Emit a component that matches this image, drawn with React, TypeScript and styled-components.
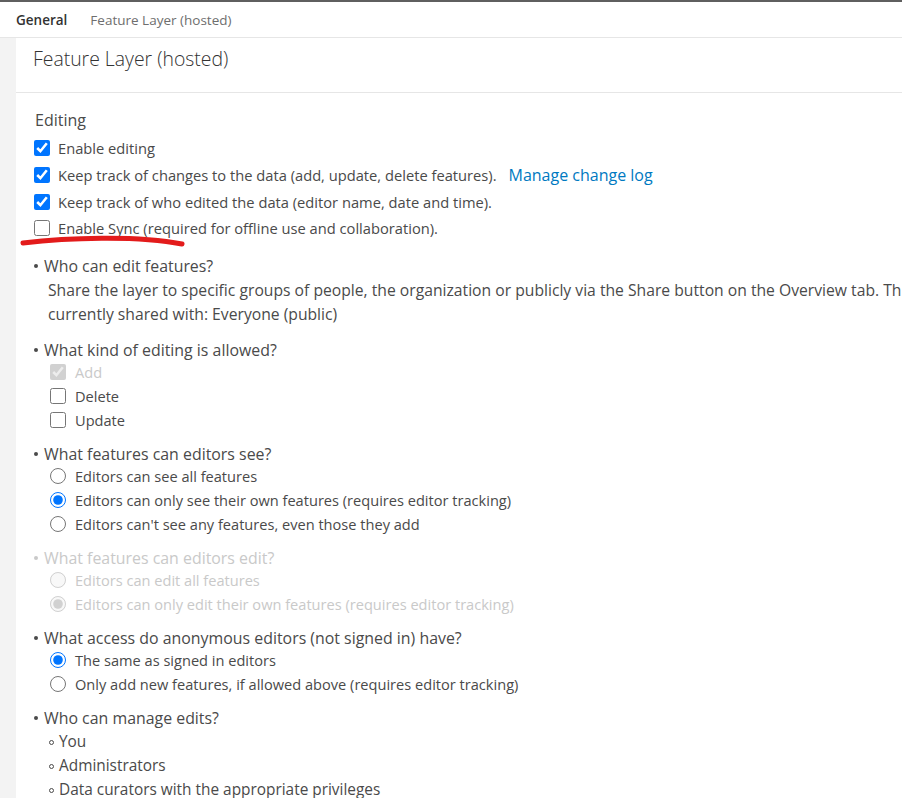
import React from "react";
import styled, { createGlobalStyle } from "styled-components";

const Global = createGlobalStyle`
  html, body { margin: 0; padding: 0; overflow: hidden; background: #fff; }
  body { font-family: "Open Sans", "Noto Sans", sans-serif; color: #4a4a4a; }
  * { box-sizing: border-box; }
`;

const Page = styled.div`
  width: 1120px;
  height: 798px;
  border-top: 2px solid #5f5f5f;
  display: flex;
  flex-direction: column;
`;

const TabBar = styled.div`
  height: 36px;
  border-bottom: 1px solid #e6e6e6;
  display: flex;
  align-items: center;
  gap: 23px;
  padding-left: 16px;
  flex: none;
`;

const Tab = styled.span<{ $active?: boolean }>`
  font-size: 13.5px;
  font-weight: ${(p) => (p.$active ? 600 : 400)};
  color: ${(p) => (p.$active ? "#323232" : "#6e6e6e")};
`;

const Body = styled.div`
  display: flex;
  flex: 1;
`;

const Gutter = styled.div`
  width: 16px;
  background: #f3f3f3;
  flex: none;
`;

const Main = styled.div`
  flex: 1;
`;

const Header = styled.div`
  height: 55px;
  border-bottom: 1px solid #e6e6e6;
  padding: 9px 0 0 17px;
`;

const Title = styled.h1`
  margin: 0;
  font-size: 19.4px;
  font-weight: 300;
  line-height: 24px;
  color: #323232;
`;

const Section = styled.section`
  position: relative;
  padding: 15px 0 0 18px;
`;

const SectionTitle = styled.h2`
  margin: 0 0 3px 1px;
  font-size: 16px;
  font-weight: 400;
  line-height: 24px;
  color: #4a4a4a;
`;

const CheckRow = styled.label<{ $tall?: boolean }>`
  display: flex;
  align-items: center;
  gap: 8px;
  height: ${(p) => (p.$tall ? 28 : 26)}px;
  font-size: 14.7px;
  color: #4a4a4a;
  white-space: nowrap;
`;

const Box = styled.input`
  width: 16px;
  height: 16px;
  margin: 0;
  flex: none;
`;

const Link = styled.a`
  margin-left: 4px;
  font-size: 16px;
  color: #0079c1;
  text-decoration: none;
`;

const Annotation = styled.svg`
  position: absolute;
  left: 0;
  top: 0;
  pointer-events: none;
  overflow: visible;
`;

const List = styled.div`
  margin-top: 13px;
  display: flex;
  flex-direction: column;
  gap: 10px;
`;

const Item = styled.div<{ $disabled?: boolean }>`
  color: ${(p) => (p.$disabled ? "#c9c9c9" : "#4a4a4a")};
`;

const Question = styled.div`
  display: flex;
  align-items: center;
  margin-bottom: -2px;
  font-size: 15.9px;
  line-height: 24px;
  color: inherit;
  white-space: nowrap;
  &::before {
    content: "";
    width: 4px;
    height: 4px;
    border-radius: 50%;
    background: currentColor;
    margin: 0 6px 0 0;
    flex: none;
  }
`;

const Description = styled.div`
  padding: 2px 0 2px 14px;
  font-size: 15.7px;
  line-height: 24px;
  white-space: nowrap;
`;

const OptionRow = styled.label<{ $disabled?: boolean }>`
  display: flex;
  align-items: center;
  gap: 9px;
  height: 24px;
  padding-left: 16px;
  font-size: 14.6px;
  color: ${(p) => (p.$disabled ? "#c9c9c9" : "#4a4a4a")};
  white-space: nowrap;
`;

const SubList = styled.div`
  padding-top: 2px;
`;

const SubItem = styled.div`
  display: flex;
  align-items: center;
  padding-left: 15px;
  font-size: 15.4px;
  line-height: 24px;
  white-space: nowrap;
  &::before {
    content: "";
    width: 3px;
    height: 3px;
    border: 1px solid #4a4a4a;
    border-radius: 50%;
    margin-right: 5px;
    flex: none;
  }
`;

type Opt = { label: string; checked?: boolean; disabled?: boolean };

const Options: React.FC<{ type: "checkbox" | "radio"; name: string; items: Opt[]; disabled?: boolean }> = ({ type, name, items, disabled }) => (
  <>
    {items.map((o) => (
      <OptionRow key={o.label} $disabled={disabled || o.disabled}>
        <Box type={type} name={name} defaultChecked={o.checked} disabled={disabled || o.disabled} />
        {o.label}
      </OptionRow>
    ))}
  </>
);

export default function App() {
  return (
    <>
      <Global />
      <Page>
        <TabBar>
          <Tab $active>General</Tab>
          <Tab>Feature Layer (hosted)</Tab>
        </TabBar>
        <Body>
          <Gutter />
          <Main>
            <Header>
              <Title>Feature Layer (hosted)</Title>
            </Header>
            <Section>
              <SectionTitle>Editing</SectionTitle>
              <CheckRow>
                <Box type="checkbox" defaultChecked />
                Enable editing
              </CheckRow>
              <CheckRow $tall>
                <Box type="checkbox" defaultChecked />
                Keep track of changes to the data (add, update, delete features).
                <Link href="#">Manage change log</Link>
              </CheckRow>
              <CheckRow>
                <Box type="checkbox" defaultChecked />
                Keep track of who edited the data (editor name, date and time).
              </CheckRow>
              <CheckRow>
                <Box type="checkbox" />
                Enable Sync (required for offline use and collaboration).
              </CheckRow>

              <List>
                <Item>
                  <Question>Who can edit features?</Question>
                  <Description>
                    Share the layer to specific groups of people, the organization or publicly via the Share button on the Overview tab. This layer is
                    <br />
                    currently shared with: Everyone (public)
                  </Description>
                </Item>
                <Item>
                  <Question>What kind of editing is allowed?</Question>
                  <Options
                    type="checkbox"
                    name="kind"
                    items={[
                      { label: "Add", checked: true, disabled: true },
                      { label: "Delete" },
                      { label: "Update" },
                    ]}
                  />
                </Item>
                <Item>
                  <Question>What features can editors see?</Question>
                  <Options
                    type="radio"
                    name="see"
                    items={[
                      { label: "Editors can see all features" },
                      { label: "Editors can only see their own features (requires editor tracking)", checked: true },
                      { label: "Editors can't see any features, even those they add" },
                    ]}
                  />
                </Item>
                <Item $disabled>
                  <Question>What features can editors edit?</Question>
                  <Options
                    type="radio"
                    name="edit"
                    disabled
                    items={[
                      { label: "Editors can edit all features" },
                      { label: "Editors can only edit their own features (requires editor tracking)", checked: true },
                    ]}
                  />
                </Item>
                <Item>
                  <Question>What access do anonymous editors (not signed in) have?</Question>
                  <Options
                    type="radio"
                    name="anon"
                    items={[
                      { label: "The same as signed in editors", checked: true },
                      { label: "Only add new features, if allowed above (requires editor tracking)" },
                    ]}
                  />
                </Item>
                <Item>
                  <Question>Who can manage edits?</Question>
                  <SubList>
                    <SubItem>You</SubItem>
                    <SubItem>Administrators</SubItem>
                    <SubItem>Data curators with the appropriate privileges</SubItem>
                  </SubList>
                </Item>
              </List>

              <Annotation width="200" height="200">
                <path d="M7 150 C 50 145, 120 142, 166 151" fill="none" stroke="#e31b1b" strokeWidth="5" strokeLinecap="round" />
              </Annotation>
            </Section>
          </Main>
        </Body>
      </Page>
    </>
  );
}
